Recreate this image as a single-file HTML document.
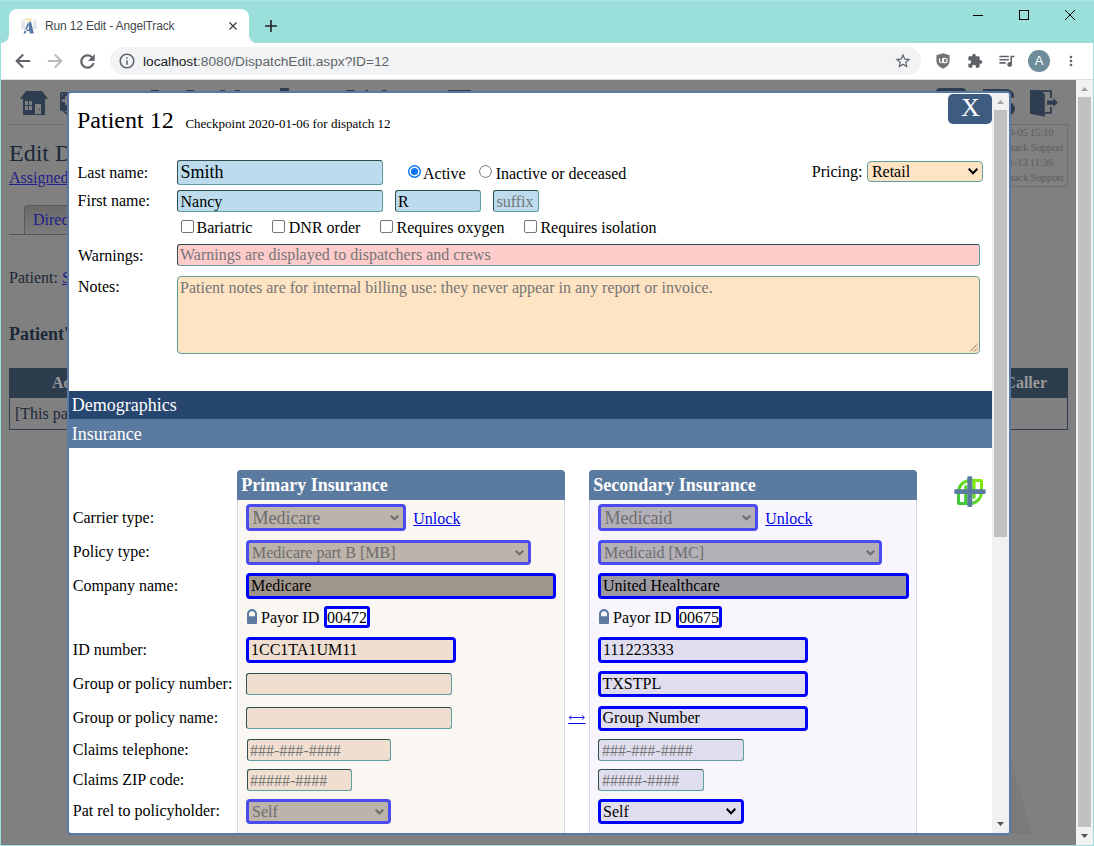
<!DOCTYPE html>
<html><head><meta charset="utf-8">
<style>
*{box-sizing:border-box;margin:0;padding:0}
html,body{width:1094px;height:846px;overflow:hidden;background:#9adfd9}
body{position:relative;font-family:"Liberation Serif",serif;}
.a{position:absolute}
.ui{font-family:"Liberation Sans",sans-serif}
#tab{left:9px;top:9px;width:240px;height:35px;background:#fff;border-radius:8px 8px 0 0}
.foot{width:8px;height:8px;top:35px;background:#fff}
.foot i{position:absolute;left:0;top:0;width:8px;height:8px;background:#9adfd9}
#toolbar{left:1px;top:43px;width:1092px;height:37px;background:#fff}
#omni{left:110px;top:47px;width:811px;height:28px;border-radius:14px;background:#f1f3f4}
#page{left:1px;top:80px;width:1092px;height:765px;background:#808080;overflow:hidden}
.sb{background:#f1f1f1}
.thumb{background:#c1c1c1}
.tri-up{width:0;height:0;border-left:3.5px solid transparent;border-right:3.5px solid transparent;border-bottom:4px solid #a3a3a3}
.tri-dn{width:0;height:0;border-left:3.5px solid transparent;border-right:3.5px solid transparent;border-top:4px solid #505050}
#modal{left:67px;top:91px;width:944px;height:744px;border:2px solid #5a7aa5;border-radius:4px;background:#fff;overflow:hidden}
.lbl{font-size:16px;color:#000;white-space:nowrap}
</style></head>
<body>
<!-- tab strip -->
<div class="a" style="left:0;top:0;width:1094px;height:1px;background:#a9e4df"></div>
<div class="a" id="tab"></div>
<div class="a foot" style="left:1px"><i style="border-bottom-right-radius:8px"></i></div>
<div class="a foot" style="left:249px"><i style="border-bottom-left-radius:8px"></i></div>


<!-- favicon -->
<svg class="a" style="left:21px;top:18px" width="16" height="16" viewBox="0 0 16 16">
<defs><linearGradient id="wg" x1="0" y1="0" x2="0" y2="1"><stop offset="0" stop-color="#eef1f6"/><stop offset="1" stop-color="#d9e0ea"/></linearGradient></defs>
<path d="M0 1.2H4V10.8H0z M12 1.2H16V10.8H12z" fill="url(#wg)"/>
<ellipse cx="7.7" cy="1.6" rx="3.6" ry="1.4" fill="#f6e395"/><ellipse cx="7.7" cy="1.6" rx="2" ry="0.6" fill="#fbf0c0"/>
<path d="M2.5 15.6H4.6L8.6 3.6H7.1z M7.1 3.6H10L12.8 15.6H8.8z M3.4 11.4H10.4V12.9H3.4z" fill="#5677a2"/>
</svg>
<div class="a ui" style="left:45px;top:18px;font-size:12px;line-height:16px;color:#45494d;white-space:nowrap;letter-spacing:-0.15px">Run 12 Edit - AngelTrack</div>
<svg class="a" style="left:229px;top:22px" width="8" height="8" viewBox="0 0 8 8"><path d="M0.5 0.5L7.5 7.5M7.5 0.5L0.5 7.5" stroke="#3c4043" stroke-width="1.4"/></svg>
<svg class="a" style="left:265px;top:20px" width="12" height="12" viewBox="0 0 12 12"><path d="M6 0V12M0 6H12" stroke="#202124" stroke-width="1.6"/></svg>
<!-- window controls -->
<div class="a" style="left:973px;top:15px;width:10px;height:1px;background:#000"></div>
<div class="a" style="left:1019px;top:10px;width:10px;height:10px;border:1px solid #000"></div>
<svg class="a" style="left:1065px;top:10px" width="10" height="10" viewBox="0 0 10 10"><path d="M0 0L10 10M10 0L0 10" stroke="#000" stroke-width="1"/></svg>

<div class="a" id="toolbar"></div>
<div class="a" id="omni"></div>
<div class="a" style="left:1px;top:79px;width:1092px;height:1px;background:#dadce0"></div>


<svg class="a" style="left:14px;top:52px" width="18" height="18" viewBox="0 0 18 18"><path d="M16.2 9H3.2M9.2 2.5L2.7 9 9.2 15.5" stroke="#5f6368" stroke-width="2" fill="none"/></svg>
<svg class="a" style="left:46px;top:52px" width="18" height="18" viewBox="0 0 18 18"><path d="M1.8 9H14.8M8.8 2.5L15.3 9 8.8 15.5" stroke="#bababa" stroke-width="2" fill="none"/></svg>
<svg class="a" style="left:76.5px;top:50.5px" width="21" height="21" viewBox="0 0 24 24"><path fill="#5f6368" stroke="#5f6368" stroke-width="0.5" d="M17.65 6.35C16.2 4.9 14.21 4 12 4c-4.42 0-7.99 3.58-7.99 8s3.57 8 7.99 8c3.73 0 6.84-2.55 7.73-6h-2.08c-.82 2.33-3.04 4-5.65 4-3.31 0-6-2.69-6-6s2.69-6 6-6c1.66 0 3.14.69 4.22 1.78L13 11h7V4l-2.35 2.35z"/></svg>
<svg class="a" style="left:118px;top:52px" width="18" height="18" viewBox="0 0 24 24"><path fill="#5f6368" d="M11 7h2v2h-2zm0 4h2v6h-2zm1-9C6.48 2 2 6.48 2 12s4.48 10 10 10 10-4.48 10-10S17.52 2 12 2zm0 18c-4.41 0-8-3.59-8-8s3.59-8 8-8 8 3.59 8 8-3.59 8-8 8z"/></svg>
<div class="a ui" style="left:143px;top:54px;font-size:13.7px;line-height:16px;white-space:nowrap;color:#5f6368"><span style="color:#202124">localhost</span>:8080/DispatchEdit.aspx?ID=12</div>
<svg class="a" style="left:894px;top:52px" width="18" height="18" viewBox="0 0 24 24"><path fill="#5f6368" d="M22 9.24l-7.19-.62L12 2 9.19 8.63 2 9.24l5.46 4.73L5.82 21 12 17.27 18.18 21l-1.63-7.03L22 9.24zM12 15.4l-3.76 2.27 1-4.28-3.32-2.88 4.38-.38L12 6.1l1.71 4.04 4.38.38-3.32 2.88 1 4.28L12 15.4z"/></svg>
<svg class="a" style="left:935px;top:53px" width="16" height="16" viewBox="0 0 16 16"><path fill="#737373" d="M8 0.3L14.6 2.3V7.5C14.6 11.3 11.7 14.3 8 15.7 4.3 14.3 1.4 11.3 1.4 7.5V2.3z"/><path d="M4.6 5.2V8.2a1.5 1.5 0 0 0 3 0V5.2M8.6 5.2v4.6h1.3a2.1 2.1 0 0 0 0-4.6z" fill="none" stroke="#fff" stroke-width="1.1"/></svg>
<svg class="a" style="left:967px;top:53px" width="16" height="16" viewBox="0 0 24 24"><path fill="#5f6368" d="M20.5 11H19V7c0-1.1-.9-2-2-2h-4V3.5C13 2.12 11.88 1 10.5 1S8 2.12 8 3.5V5H4c-1.1 0-1.99.9-1.99 2v3.8H3.5c1.49 0 2.7 1.21 2.7 2.7s-1.21 2.7-2.7 2.7H2V20c0 1.1.9 2 2 2h3.8v-1.5c0-1.49 1.21-2.7 2.7-2.7 1.49 0 2.7 1.21 2.7 2.7V22H17c1.1 0 2-.9 2-2v-4h1.5c1.38 0 2.5-1.12 2.5-2.5S21.88 11 20.5 11z"/></svg>
<svg class="a" style="left:997px;top:51px" width="19" height="19" viewBox="0 0 24 24"><path fill="#5f6368" d="M15 6H3v2h12V6zm0 4H3v2h12v-2zM3 16h8v-2H3v2zM17 6v8.18c-.31-.11-.65-.18-1-.18-1.66 0-3 1.34-3 3s1.34 3 3 3 3-1.34 3-3V8h3V6h-5z"/></svg>
<div class="a ui" style="left:1028px;top:50px;width:22px;height:22px;border-radius:50%;background:#6f8c9b;color:#fff;font-size:13px;line-height:22px;text-align:center">A</div>
<svg class="a" style="left:1063px;top:53px" width="16" height="16" viewBox="0 0 24 24"><path fill="#5f6368" d="M12 8c1.1 0 2-.9 2-2s-.9-2-2-2-2 .9-2 2 .9 2 2 2zm0 2c-1.1 0-2 .9-2 2s.9 2 2 2 2-.9 2-2-.9-2-2-2zm0 6c-1.1 0-2 .9-2 2s.9 2 2 2 2-.9 2-2-.9-2-2-2z"/></svg>

<div class="a" id="page"></div>
<!-- background page (already darkened by overlay) -->
<svg class="a" style="left:20px;top:91px" width="28" height="24" viewBox="0 0 28 24"><path fill="#2e3e50" d="M6 0H22L28 8H25V24H3V8H0z"/><rect x="5" y="10" width="3" height="4" fill="#808080"/><rect x="9" y="10" width="3" height="4" fill="#808080"/><rect x="5" y="15" width="3" height="4" fill="#808080"/><rect x="9" y="15" width="3" height="4" fill="#808080"/><rect x="15" y="13" width="6" height="10" fill="#808080"/><circle cx="19.5" cy="18.5" r="0.7" fill="#2e3e50"/></svg>
<svg class="a" style="left:60px;top:92px" width="12" height="24" viewBox="0 0 12 24"><path fill="#2e3e50" d="M1 0H12V18.7H0V1z M2.6 19H5.2L9 22.8H6.4z"/><path fill="#808080" d="M5 4H6.9V7.3H12V9.9H6.9V13H5V9.9H1.8V7.3H5z"/><circle cx="2.4" cy="2.4" r="0.8" fill="#808080"/></svg>
<div class="a" style="left:9px;top:124px;width:60px;height:1px;background-image:linear-gradient(90deg,#5a5a5a 50%,transparent 50%);background-size:2px 1px"></div>
<div class="a" style="left:151px;top:90px;width:8px;height:1px;background:#2e3e50"></div>
<div class="a" style="left:186px;top:90px;width:8px;height:1px;background:#2e3e50"></div>
<div class="a" style="left:220px;top:90px;width:5px;height:1px;background:#2e3e50"></div>
<div class="a" style="left:235px;top:90px;width:5px;height:1px;background:#2e3e50"></div>
<div class="a" style="left:280px;top:88px;width:9px;height:3px;background:#2e3e50;border-radius:1px 1px 0 0"></div>
<div class="a" style="left:346px;top:90px;width:9px;height:1px;background:#2e3e50"></div>
<div class="a" style="left:365px;top:90px;width:3px;height:1px;background:#2e3e50"></div>
<div class="a" style="left:382px;top:90px;width:5px;height:1px;background:#2e3e50"></div>
<div class="a" style="left:448px;top:90px;width:23px;height:1px;background:#2e3e50"></div>
<div class="a" style="left:936px;top:88px;width:30px;height:8px;background:#2e3e50;border-radius:4px 4px 0 0"></div>
<svg class="a" style="left:980px;top:86px" width="40" height="34" viewBox="0 0 40 34"><path d="M3 4.8H25Q32.5 4.8 32.5 11.8" fill="none" stroke="#2e3e50" stroke-width="3.5"/><path d="M26 15.5A9 7.25 0 0 1 26 30z" fill="#2e3e50"/></svg>
<svg class="a" style="left:1030px;top:90px" width="29" height="28" viewBox="0 0 29 28"><path fill="#2e3e50" d="M0 0.2H8Q12 0.5 14.8 4.3V26.8L0 23.8z"/><path fill="#2e3e50" d="M0 0.2H21.9V7.9H20V2H0z M20 17H21.9V23.8H14.8V21.9H20z M17 10.4H23.3V7.9L27.9 12.5 23.3 17V14.8H17z"/></svg>
<div class="a" style="left:960px;top:124px;width:108px;height:63px;border:1px dotted #5a5a5a;border-radius:0 0 4px 4px"></div>
<div class="a" style="left:979px;top:125px;font-size:11px;line-height:15px;color:#5e5e5e;white-space:nowrap;letter-spacing:-0.3px">2019-09-05 15:10<br>AngelTrack Support<br>2020-01-13 11:36<br>AngelTrack Support</div>
<div class="a" style="left:9px;top:139px;font-size:24px;line-height:28px;color:#1b2838;white-space:nowrap">Edit Dispatch</div>
<div class="a" style="left:9px;top:169px;font-size:16px;line-height:18px;color:#20208a;text-decoration:underline;white-space:nowrap">Assigned</div>
<div class="a" style="left:24px;top:205px;width:80px;height:30px;border:1px solid #5a5a5a;border-bottom:none;border-radius:4px 4px 0 0;background:linear-gradient(#6a6a6a,#7c7c7c)"></div>
<div class="a" style="left:33px;top:211px;font-size:16px;line-height:18px;color:#1e1e8c;white-space:nowrap">Direct</div>
<div class="a" style="left:9px;top:234px;width:60px;height:1px;background:#555"></div>
<div class="a" style="left:9px;top:269px;font-size:16px;line-height:18px;color:#1b2838;white-space:nowrap">Patient: <span style="color:#20208a;text-decoration:underline">Smith</span></div>
<div class="a" style="left:9px;top:324px;font-size:18px;line-height:20px;font-weight:bold;color:#1b2838;white-space:nowrap">Patient's</div>
<div class="a" style="left:9px;top:368px;width:1059px;height:62px;border:1px solid #2e3e50"></div>
<div class="a" style="left:9px;top:368px;width:1059px;height:30px;background:#2e3d4e"></div>
<div class="a" style="left:52px;top:374px;font-size:16px;line-height:18px;font-weight:bold;color:#9a9a9a;white-space:nowrap">Ac</div>
<div class="a" style="left:985px;top:374px;width:62px;text-align:right;font-size:16px;line-height:18px;font-weight:bold;color:#9a9a9a;white-space:nowrap">Caller</div>
<div class="a" style="left:15px;top:405px;font-size:16px;line-height:18px;color:#1b2838;white-space:nowrap">[This patient</div>


<!-- page scrollbar -->
<div class="a sb" style="left:1076px;top:80px;width:17px;height:765px"></div>
<div class="a thumb" style="left:1078px;top:97px;width:13px;height:730px"></div>
<svg class="a" style="left:1080px;top:86px" width="9" height="6" viewBox="0 0 9 6"><path d="M1 5L4.5 1L8 5z" fill="#a3a3a3"/></svg>
<svg class="a" style="left:1080px;top:833px" width="9" height="6" viewBox="0 0 9 6"><path d="M1 1L4.5 5L8 1z" fill="#505050"/></svg>

<!-- modal -->
<svg class="a" style="left:1011px;top:760px" width="22" height="75" viewBox="0 0 22 75"><path d="M0 0L21 74H0z" fill="rgba(0,0,0,0.04)"/></svg>
<div class="a" id="modal"><div class="a" style="left:-69px;top:-93px;width:1094px;height:846px">
<div class="a" style="left:77px;top:105.20px;font-size:24px;line-height:30px;color:#000;white-space:nowrap;">Patient 12</div>
<div class="a" style="left:185.4px;top:116.11px;font-size:13px;line-height:16px;color:#000;white-space:nowrap;">Checkpoint 2020-01-06 for dispatch 12</div>
<div class="a" style="left:948px;top:94px;width:44px;height:30px;background:#3e5b80;border-radius:5px"></div>
<div class="a" style="left:948px;top:92.32px;font-size:26px;line-height:32px;color:#fff;white-space:nowrap;width:44px;text-align:center;padding-left:1px;">X</div>
<div class="a" style="left:77.6px;top:162.60px;font-size:16px;line-height:20px;color:#000;white-space:nowrap;">Last name:</div>
<div class="a" style="left:177px;top:160px;width:206px;height:25px;border:1px solid;border-color:#2f4f4f #5f9ea0 #5f9ea0 #2f4f4f;border-radius:3px;background:#bcdcee"></div>
<div class="a" style="left:180.5px;top:161.12px;font-size:18px;line-height:22px;color:#000;white-space:nowrap;">Smith</div>
<svg class="a" style="left:408px;top:165px" width="13" height="13" viewBox="0 0 13 13"><circle cx="6.5" cy="6.5" r="5.8" fill="#fff" stroke="#0b76f5" stroke-width="1.4"/><circle cx="6.5" cy="6.5" r="3.6" fill="#0b76f5"/></svg>
<div class="a" style="left:423px;top:163.50px;font-size:16px;line-height:20px;color:#000;white-space:nowrap;">Active</div>
<svg class="a" style="left:479px;top:165px" width="13" height="13" viewBox="0 0 13 13"><circle cx="6.5" cy="6.5" r="5.9" fill="#fff" stroke="#767676" stroke-width="1"/></svg>
<div class="a" style="left:495.7px;top:163.50px;font-size:16px;line-height:20px;color:#000;white-space:nowrap;">Inactive or deceased</div>
<div class="a" style="left:811.8px;top:161.90px;font-size:16px;line-height:20px;color:#000;white-space:nowrap;">Pricing:</div>
<div class="a" style="left:867px;top:161px;width:116px;height:21px;border:1px solid #5f9ea0;border-radius:4px;background:#ffe4c4"></div>
<div class="a" style="left:871.9px;top:161.90px;font-size:16px;line-height:20px;color:#000;white-space:nowrap;">Retail</div>
<svg class="a" style="left:967.0px;top:167.0px" width="12" height="8" viewBox="-1 -1 12 8"><path d="M0.7 0.7L5.0 5.3L9.3 0.7" fill="none" stroke="#000" stroke-width="2"/></svg>
<div class="a" style="left:77.6px;top:191.10px;font-size:16px;line-height:20px;color:#000;white-space:nowrap;">First name:</div>
<div class="a" style="left:177px;top:190px;width:206px;height:22px;border:1px solid;border-color:#2f4f4f #5f9ea0 #5f9ea0 #2f4f4f;border-radius:3px;background:#bcdcee"></div>
<div class="a" style="left:180.5px;top:191.70px;font-size:16px;line-height:20px;color:#000;white-space:nowrap;">Nancy</div>
<div class="a" style="left:395px;top:190px;width:86px;height:22px;border:1px solid;border-color:#2f4f4f #5f9ea0 #5f9ea0 #2f4f4f;border-radius:3px;background:#bcdcee"></div>
<div class="a" style="left:398px;top:191.70px;font-size:16px;line-height:20px;color:#000;white-space:nowrap;">R</div>
<div class="a" style="left:493px;top:190px;width:46px;height:22px;border:1px solid;border-color:#2f4f4f #5f9ea0 #5f9ea0 #2f4f4f;border-radius:3px;background:#bcdcee"></div>
<div class="a" style="left:496.5px;top:191.70px;font-size:16px;line-height:20px;color:#757575;white-space:nowrap;">suffix</div>
<div class="a" style="left:181px;top:220px;width:13px;height:13px;border:1px solid #767676;border-radius:2px;background:#fff"></div>
<div class="a" style="left:196.5px;top:218.30px;font-size:16px;line-height:20px;color:#000;white-space:nowrap;">Bariatric</div>
<div class="a" style="left:272px;top:220px;width:13px;height:13px;border:1px solid #767676;border-radius:2px;background:#fff"></div>
<div class="a" style="left:288.8px;top:218.30px;font-size:16px;line-height:20px;color:#000;white-space:nowrap;">DNR order</div>
<div class="a" style="left:380px;top:220px;width:13px;height:13px;border:1px solid #767676;border-radius:2px;background:#fff"></div>
<div class="a" style="left:396.5px;top:218.30px;font-size:16px;line-height:20px;color:#000;white-space:nowrap;">Requires oxygen</div>
<div class="a" style="left:524px;top:220px;width:13px;height:13px;border:1px solid #767676;border-radius:2px;background:#fff"></div>
<div class="a" style="left:540.4px;top:218.30px;font-size:16px;line-height:20px;color:#000;white-space:nowrap;">Requires isolation</div>
<div class="a" style="left:78px;top:245.70px;font-size:16px;line-height:20px;color:#000;white-space:nowrap;">Warnings:</div>
<div class="a" style="left:177px;top:244px;width:803px;height:22px;border:1px solid;border-color:#2f4f4f #5f9ea0 #5f9ea0 #2f4f4f;border-radius:3px;background:#ffcccc"></div>
<div class="a" style="left:180px;top:245.10px;font-size:16px;line-height:20px;color:#757575;white-space:nowrap;">Warnings are displayed to dispatchers and crews</div>
<div class="a" style="left:78px;top:277.20px;font-size:16px;line-height:20px;color:#000;white-space:nowrap;">Notes:</div>
<div class="a" style="left:177px;top:276px;width:803px;height:78px;border:1px solid #5f9ea0;border-radius:4px;background:#ffe4c4"></div>
<div class="a" style="left:180px;top:277.80px;font-size:16px;line-height:20px;color:#757575;white-space:nowrap;">Patient notes are for internal billing use: they never appear in any report or invoice.</div>
<svg class="a" style="left:969px;top:343px" width="9" height="9" viewBox="0 0 9 9"><path d="M8.5 1L1 8.5M8.5 5L5 8.5" stroke="#4a4a4a" stroke-width="1" stroke-dasharray="1 0.5"/></svg>
<div class="a" style="left:69px;top:391px;width:923px;height:28px;background:#27466f"></div>
<div class="a" style="left:71.8px;top:393.82px;font-size:18px;line-height:22px;color:#fff;white-space:nowrap;">Demographics</div>
<div class="a" style="left:69px;top:419px;width:923px;height:29px;background:#5b7aa0"></div>
<div class="a" style="left:71.8px;top:422.73px;font-size:18px;line-height:22px;color:#fff;white-space:nowrap;">Insurance</div>
<div class="a" style="left:72.8px;top:508.20px;font-size:16px;line-height:20px;color:#000;white-space:nowrap;">Carrier type:</div>
<div class="a" style="left:72.8px;top:541.70px;font-size:16px;line-height:20px;color:#000;white-space:nowrap;">Policy type:</div>
<div class="a" style="left:72.8px;top:575.60px;font-size:16px;line-height:20px;color:#000;white-space:nowrap;">Company name:</div>
<div class="a" style="left:72.8px;top:640.10px;font-size:16px;line-height:20px;color:#000;white-space:nowrap;">ID number:</div>
<div class="a" style="left:72.8px;top:674.10px;font-size:16px;line-height:20px;color:#000;white-space:nowrap;">Group or policy number:</div>
<div class="a" style="left:72.8px;top:708.10px;font-size:16px;line-height:20px;color:#000;white-space:nowrap;">Group or policy name:</div>
<div class="a" style="left:72.8px;top:739.60px;font-size:16px;line-height:20px;color:#000;white-space:nowrap;">Claims telephone:</div>
<div class="a" style="left:72.8px;top:769.90px;font-size:16px;line-height:20px;color:#000;white-space:nowrap;">Claims ZIP code:</div>
<div class="a" style="left:72.8px;top:800.50px;font-size:16px;line-height:20px;color:#000;white-space:nowrap;">Pat rel to policyholder:</div>
<div class="a" style="left:237px;top:470px;width:328px;height:390px;background:#faf6f2;border:1px solid #d3d9e3;border-radius:4px 4px 0 0"></div>
<div class="a" style="left:237px;top:470px;width:328px;height:30px;background:#5b7aa0;border-radius:4px 4px 0 0"></div>
<div class="a" style="left:241.2px;top:474.43px;font-size:18px;line-height:22px;color:#fff;white-space:nowrap;font-weight:bold;">Primary Insurance</div>
<div class="a" style="left:246px;top:504px;width:160px;height:27px;border:3px solid #4b4bf0;border-radius:4px;background:#bcb3ab"></div>
<div class="a" style="left:252.4px;top:507.22px;font-size:18px;line-height:22px;color:#6d6d6d;white-space:nowrap;">Medicare</div>
<svg class="a" style="left:388.5px;top:514.0px" width="11" height="7" viewBox="-1 -1 11 7"><path d="M0.7 0.7L4.5 4.3L8.3 0.7" fill="none" stroke="#6d6d6d" stroke-width="2"/></svg>
<div class="a" style="left:413.3px;top:509.10px;font-size:16px;line-height:20px;color:#0000ee;white-space:nowrap;text-decoration:underline;">Unlock</div>
<div class="a" style="left:246px;top:540px;width:285px;height:25px;border:3px solid #4b4bf0;border-radius:4px;background:#bcb3ab"></div>
<div class="a" style="left:252px;top:543.10px;font-size:16px;line-height:20px;color:#6d6d6d;white-space:nowrap;">Medicare part B [MB]</div>
<svg class="a" style="left:514.0px;top:548.5px" width="11" height="7" viewBox="-1 -1 11 7"><path d="M0.7 0.7L4.5 4.3L8.3 0.7" fill="none" stroke="#6d6d6d" stroke-width="2"/></svg>
<div class="a" style="left:246px;top:573px;width:310px;height:26px;border:3px solid #0000ff;border-radius:4px;background:#a0958b"></div>
<div class="a" style="left:251px;top:576.10px;font-size:16px;line-height:20px;color:#000;white-space:nowrap;">Medicare</div>
<svg class="a" style="left:247px;top:609px" width="10" height="15" viewBox="0 0 10 15"><path fill="#5b7aa0" fill-rule="evenodd" d="M0 5A5 5 0 0 1 10 5V14a1 1 0 0 1-1 1H1a1 1 0 0 1-1-1z M2 5.3A3 3 0 0 1 8 5.3V7.3H2z"/></svg>
<div class="a" style="left:261px;top:608.10px;font-size:16px;line-height:20px;color:#000;white-space:nowrap;">Payor ID</div>
<div class="a" style="left:324px;top:606px;width:46px;height:22px;border:3px solid #0000ff;border-radius:3px;background:#fff"></div>
<div class="a" style="left:327px;top:607.60px;font-size:16px;line-height:20px;color:#000;white-space:nowrap;">00472</div>
<div class="a" style="left:246px;top:637px;width:210px;height:26px;border:3px solid #0000ff;border-radius:4px;background:#f0dfd0"></div>
<div class="a" style="left:251px;top:639.60px;font-size:16px;line-height:20px;color:#000;white-space:nowrap;">1CC1TA1UM11</div>
<div class="a" style="left:246px;top:673px;width:206px;height:22px;border:1px solid;border-color:#2f4f4f #5f9ea0 #5f9ea0 #2f4f4f;border-radius:3px;background:#f0dfd0"></div>
<div class="a" style="left:246px;top:707px;width:206px;height:22px;border:1px solid;border-color:#2f4f4f #5f9ea0 #5f9ea0 #2f4f4f;border-radius:3px;background:#f0dfd0"></div>
<div class="a" style="left:247px;top:739px;width:144px;height:22px;border:1px solid;border-color:#2f4f4f #5f9ea0 #5f9ea0 #2f4f4f;border-radius:3px;background:#f0dfd0"></div>
<div class="a" style="left:250px;top:740.60px;font-size:16px;line-height:20px;color:#757575;white-space:nowrap;">###-###-####</div>
<div class="a" style="left:247px;top:769px;width:105px;height:22px;border:1px solid;border-color:#2f4f4f #5f9ea0 #5f9ea0 #2f4f4f;border-radius:3px;background:#f0dfd0"></div>
<div class="a" style="left:250px;top:770.60px;font-size:16px;line-height:20px;color:#757575;white-space:nowrap;">#####-####</div>
<div class="a" style="left:246px;top:799px;width:145px;height:25px;border:3px solid #4b4bf0;border-radius:4px;background:#bcb3ab"></div>
<div class="a" style="left:252px;top:802.10px;font-size:16px;line-height:20px;color:#6d6d6d;white-space:nowrap;">Self</div>
<svg class="a" style="left:374.0px;top:807.5px" width="11" height="7" viewBox="-1 -1 11 7"><path d="M0.7 0.7L4.5 4.3L8.3 0.7" fill="none" stroke="#6d6d6d" stroke-width="2"/></svg>
<div class="a" style="left:589px;top:470px;width:328px;height:390px;background:#f8f6fc;border:1px solid #d3d9e3;border-radius:4px 4px 0 0"></div>
<div class="a" style="left:589px;top:470px;width:328px;height:30px;background:#5b7aa0;border-radius:4px 4px 0 0"></div>
<div class="a" style="left:593.2px;top:474.43px;font-size:18px;line-height:22px;color:#fff;white-space:nowrap;font-weight:bold;">Secondary Insurance</div>
<div class="a" style="left:598px;top:504px;width:160px;height:27px;border:3px solid #4b4bf0;border-radius:4px;background:#b4b0b8"></div>
<div class="a" style="left:604.4px;top:507.22px;font-size:18px;line-height:22px;color:#6d6d6d;white-space:nowrap;">Medicaid</div>
<svg class="a" style="left:740.5px;top:514.0px" width="11" height="7" viewBox="-1 -1 11 7"><path d="M0.7 0.7L4.5 4.3L8.3 0.7" fill="none" stroke="#6d6d6d" stroke-width="2"/></svg>
<div class="a" style="left:765.3px;top:509.10px;font-size:16px;line-height:20px;color:#0000ee;white-space:nowrap;text-decoration:underline;">Unlock</div>
<div class="a" style="left:598px;top:540px;width:284px;height:25px;border:3px solid #4b4bf0;border-radius:4px;background:#b4b0b8"></div>
<div class="a" style="left:604px;top:543.10px;font-size:16px;line-height:20px;color:#6d6d6d;white-space:nowrap;">Medicaid [MC]</div>
<svg class="a" style="left:865.0px;top:548.5px" width="11" height="7" viewBox="-1 -1 11 7"><path d="M0.7 0.7L4.5 4.3L8.3 0.7" fill="none" stroke="#6d6d6d" stroke-width="2"/></svg>
<div class="a" style="left:598px;top:573px;width:311px;height:26px;border:3px solid #0000ff;border-radius:4px;background:#9c98a0"></div>
<div class="a" style="left:603px;top:576.10px;font-size:16px;line-height:20px;color:#000;white-space:nowrap;">United Healthcare</div>
<svg class="a" style="left:599px;top:609px" width="10" height="15" viewBox="0 0 10 15"><path fill="#5b7aa0" fill-rule="evenodd" d="M0 5A5 5 0 0 1 10 5V14a1 1 0 0 1-1 1H1a1 1 0 0 1-1-1z M2 5.3A3 3 0 0 1 8 5.3V7.3H2z"/></svg>
<div class="a" style="left:613px;top:608.10px;font-size:16px;line-height:20px;color:#000;white-space:nowrap;">Payor ID</div>
<div class="a" style="left:676px;top:606px;width:46px;height:22px;border:3px solid #0000ff;border-radius:3px;background:#fff"></div>
<div class="a" style="left:679px;top:607.60px;font-size:16px;line-height:20px;color:#000;white-space:nowrap;">00675</div>
<div class="a" style="left:598px;top:637px;width:210px;height:26px;border:3px solid #0000ff;border-radius:4px;background:#e0deee"></div>
<div class="a" style="left:603px;top:639.60px;font-size:16px;line-height:20px;color:#000;white-space:nowrap;">111223333</div>
<div class="a" style="left:598px;top:671px;width:210px;height:26px;border:3px solid #0000ff;border-radius:4px;background:#e0deee"></div>
<div class="a" style="left:602.5px;top:673.60px;font-size:16px;line-height:20px;color:#000;white-space:nowrap;">TXSTPL</div>
<div class="a" style="left:598px;top:706px;width:210px;height:25px;border:3px solid #0000ff;border-radius:4px;background:#e0deee"></div>
<div class="a" style="left:602.5px;top:707.60px;font-size:16px;line-height:20px;color:#000;white-space:nowrap;">Group Number</div>
<div class="a" style="left:598px;top:739px;width:146px;height:22px;border:1px solid;border-color:#2f4f4f #5f9ea0 #5f9ea0 #2f4f4f;border-radius:3px;background:#e0deee"></div>
<div class="a" style="left:602px;top:740.60px;font-size:16px;line-height:20px;color:#757575;white-space:nowrap;">###-###-####</div>
<div class="a" style="left:598px;top:769px;width:106px;height:22px;border:1px solid;border-color:#2f4f4f #5f9ea0 #5f9ea0 #2f4f4f;border-radius:3px;background:#e0deee"></div>
<div class="a" style="left:602px;top:770.60px;font-size:16px;line-height:20px;color:#757575;white-space:nowrap;">#####-####</div>
<div class="a" style="left:598px;top:799px;width:146px;height:25px;border:3px solid #0000ff;border-radius:4px;background:#e0deee"></div>
<div class="a" style="left:603px;top:802.10px;font-size:16px;line-height:20px;color:#000;white-space:nowrap;">Self</div>
<svg class="a" style="left:725.0px;top:807.0px" width="12" height="8" viewBox="-1 -1 12 8"><path d="M0.7 0.7L5.0 5.3L9.3 0.7" fill="none" stroke="#000" stroke-width="2"/></svg>
<svg class="a" style="left:568px;top:712px" width="18" height="13" viewBox="0 0 18 13"><path d="M1.2 5.5H16.3M3.4 3.3L1.2 5.5 3.4 7.7M14.1 3.3L16.3 5.5 14.1 7.7" fill="none" stroke="#1a1aee" stroke-width="1"/><rect x="0.3" y="11" width="17" height="1" fill="#0000ee"/></svg>
<svg class="a" style="left:952px;top:474px" width="36" height="36" viewBox="0 0 36 36">
<defs><linearGradient id="gg" x1="1" y1="0" x2="0" y2="1"><stop offset="0" stop-color="#8af00a"/><stop offset="1" stop-color="#36c23e"/></linearGradient></defs>
<path fill="url(#gg)" fill-rule="evenodd" d="M18 5H29a2 2 0 0 1 2 2V18A13 13 0 0 1 18 31H7a2 2 0 0 1-2-2V18A13 13 0 0 1 18 5z M18 8H28V18A10 10 0 0 1 18 28H8V18A10 10 0 0 1 18 8z"/>
<path fill="url(#gg)" d="M12.2 12.5a1.6 1.6 0 0 1 3.2 0V28H12.2z M20.2 8H23.6V23.2a1.7 1.7 0 0 1-3.4 0z"/>
<rect x="15.3" y="2.3" width="4.9" height="30.7" rx="1.2" fill="#5b7aa0"/>
<rect x="2.3" y="15.3" width="31.3" height="4.6" rx="1.2" fill="#5b7aa0"/>
</svg>
<div class="a" style="left:992px;top:93px;width:17px;height:740px;background:#f1f1f1"></div>
<div class="a" style="left:994px;top:110px;width:13px;height:427px;background:#c1c1c1"></div>
<svg class="a" style="left:996px;top:99px" width="9" height="6" viewBox="0 0 9 6"><path d="M1 5L4.5 1L8 5z" fill="#a3a3a3"/></svg>
<svg class="a" style="left:996px;top:821px" width="9" height="6" viewBox="0 0 9 6"><path d="M1 1L4.5 5L8 1z" fill="#505050"/></svg>
</div></div>
</body></html>
